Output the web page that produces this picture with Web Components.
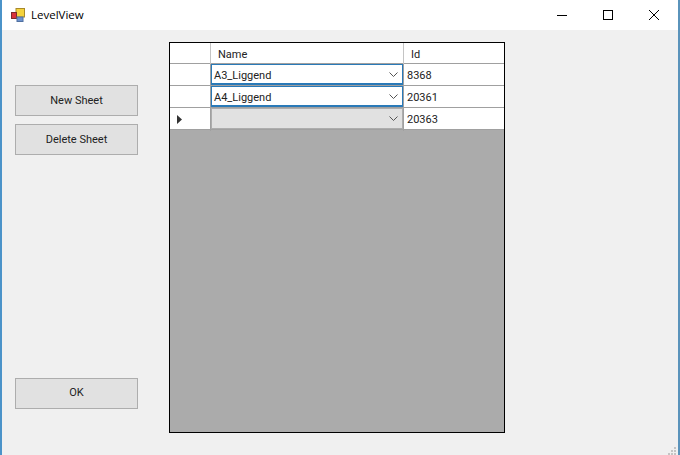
<!DOCTYPE html>
<html>
<head>
<meta charset="utf-8">
<title>LevelView</title>
<style>
  html, body { margin: 0; height: 100%; background: #f0f0f0; }
  body { font: 11px Roboto, "Liberation Sans", Arial, sans-serif; color: #222; overflow: hidden; }
</style>
</head>
<body>
<win-frame caption="LevelView">
  <div slot="side">
    <win-button>New Sheet</win-button>
    <win-button>Delete Sheet</win-button>
  </div>
  <win-button slot="foot">OK</win-button>
  <level-grid>
    <grid-row name="A3_Liggend" sheet-id="8368"></grid-row>
    <grid-row name="A4_Liggend" sheet-id="20361"></grid-row>
    <grid-row current sheet-id="20363"></grid-row>
  </level-grid>
</win-frame>

<script>
class WinFrame extends HTMLElement {
  constructor() {
    super();
    this.attachShadow({ mode: "open" });
  }

  connectedCallback() {
    this.shadowRoot.innerHTML = `
      <style>
        :host {
          display: flex;
          flex-direction: column;
          position: relative;
          box-sizing: border-box;
          width: 680px;
          height: 455px;
          border-left: 2px solid #4b93c9;
          border-right: 2px solid #5a93bb;
          background: #f0f0f0;
        }
        .title {
          display: flex;
          align-items: center;
          height: 30px;
          flex: none;
          background: #fff;
        }
        .title svg.app { margin-left: 9px; }
        .caption {
          flex: 1;
          margin-left: 6px;
          padding-bottom: 2px;
          font: 11.5px "Open Sans", "Liberation Sans", sans-serif;
          color: #000;
        }
        .ctl {
          width: 46px;
          height: 30px;
          display: flex;
          align-items: center;
          justify-content: center;
        }
        .ctls { display: flex; margin-right: 1px; }
        .body {
          flex: 1;
          display: flex;
          padding: 12px 0 22px 13px;
          min-height: 0;
        }
        .left {
          width: 123px;
          margin-right: 31px;
          display: flex;
          flex-direction: column;
          justify-content: space-between;
          padding: 43px 0 24px;
        }
        .grip { position: absolute; right: 1px; bottom: 0; }
      </style>
      <div class="title">
        <svg class="app" width="14" height="14" viewBox="0 0 14 14">
          <rect x="5" y="0.5" width="8.5" height="8.5" fill="#f4d23c" stroke="#a8892a"/>
          <rect x="0.5" y="4.5" width="5" height="6" fill="#d8323a" stroke="#7c2a2a"/>
          <rect x="6" y="9" width="6" height="4.5" fill="#6d93cf" stroke="#5070a0"/>
        </svg>
        <div class="caption"></div>
        <div class="ctls">
          <div class="ctl"><svg width="10" height="10" viewBox="0 0 10 10"><path d="M0 5.5H10" stroke="#000" fill="none"/></svg></div>
          <div class="ctl"><svg width="10" height="10" viewBox="0 0 10 10"><rect x="0.5" y="0.5" width="9" height="9" stroke="#000" fill="none"/></svg></div>
          <div class="ctl"><svg width="10" height="10" viewBox="0 0 10 10"><path d="M0 0L10 10M10 0L0 10" stroke="#000" fill="none"/></svg></div>
        </div>
      </div>
      <div class="body">
        <div class="left">
          <slot name="side"></slot>
          <slot name="foot"></slot>
        </div>
        <slot></slot>
      </div>
      <svg class="grip" width="9" height="8" viewBox="0 0 9 8" fill="#c4c4c4">
        <rect x="6" y="0" width="2" height="2"/>
        <rect x="3" y="3" width="2" height="2"/><rect x="6" y="3" width="2" height="2"/>
        <rect x="0" y="6" width="2" height="2"/><rect x="3" y="6" width="2" height="2"/><rect x="6" y="6" width="2" height="2"/>
      </svg>
    `;
    this.shadowRoot.querySelector(".caption").textContent = this.getAttribute("caption");
  }
}

class WinButton extends HTMLElement {
  constructor() {
    super();
    this.attachShadow({ mode: "open" });
    this.shadowRoot.innerHTML = `
      <style>
        :host {
          display: flex;
          align-items: center;
          justify-content: center;
          box-sizing: border-box;
          width: 123px;
          height: 31px;
          margin-bottom: 8px;
          padding-bottom: 1px;
          background: #e1e1e1;
          border: 1px solid #adadad;
        }
        :host([slot="foot"]) { margin-bottom: 0; padding-bottom: 3px; }
      </style>
      <slot></slot>
    `;
  }
}

class LevelGrid extends HTMLElement {
  constructor() {
    super();
    this.attachShadow({ mode: "open" });
    this.shadowRoot.innerHTML = `
      <style>
        :host {
          display: flex;
          flex-direction: column;
          box-sizing: border-box;
          width: 336px;
          height: 391px;
          border: 1px solid #000;
          background: #ababab;
        }
        .head {
          display: grid;
          grid-template-columns: 41px 192px 101px;
          height: 21px;
          flex: none;
          box-sizing: border-box;
          background: #fff;
          border-bottom: 1px solid #a0a0a0;
          line-height: 22px;
        }
        .head div { box-sizing: border-box; }
        .head .blank { border-right: 1px solid #c4c4c4; }
        .head .name { padding: 1px 0 0 7px; }
        .head .id { padding: 1px 0 0 7px; border-left: 1px solid #c4c4c4; }
      </style>
      <div class="head">
        <div class="blank"></div>
        <div class="name">Name</div>
        <div class="id">Id</div>
      </div>
      <slot></slot>
    `;
  }
}

class GridRow extends HTMLElement {
  constructor() {
    super();
    this.attachShadow({ mode: "open" });
  }

  connectedCallback() {
    const current = this.hasAttribute("current");
    this.shadowRoot.innerHTML = `
      <style>
        :host {
          display: grid;
          grid-template-columns: 41px 192px 101px;
          height: 22px;
          box-sizing: border-box;
          background: #fff;
          border-bottom: 1px solid #a0a0a0;
        }
        .mark {
          box-sizing: border-box;
          border-right: 1px solid #a0a0a0;
          display: flex;
          align-items: center;
          padding-left: 7px;
        }
        .combo {
          box-sizing: border-box;
          display: flex;
          align-items: center;
          justify-content: space-between;
          height: 21px;
          padding: 0 4px 0 2px;
          border: 1px solid #2a7ab8;
          border-bottom-width: 2px;
          background: #fff;
        }
        .combo span { padding-top: 3px; }
        .combo.off {
          border: 1px solid #adadad;
          background: #e1e1e1;
        }
        .id {
          box-sizing: border-box;
          border-left: 1px solid #a0a0a0;
          padding: 1px 0 0 3px;
          line-height: 22px;
        }
      </style>
      <div class="mark">
        ${current ? '<svg width="5" height="9" viewBox="0 0 5 9"><path d="M0 0L5 4.5L0 9Z" fill="#333"/></svg>' : ""}
      </div>
      <div class="combo ${current ? "off" : ""}">
        <span>${this.getAttribute("name") || ""}</span>
        <svg width="9" height="5" viewBox="0 0 9 5"><path d="M0.5 0.5L4.5 4.5L8.5 0.5" stroke="#555" fill="none"/></svg>
      </div>
      <div class="id">${this.getAttribute("sheet-id")}</div>
    `;
  }
}

customElements.define("win-frame", WinFrame);
customElements.define("win-button", WinButton);
customElements.define("level-grid", LevelGrid);
customElements.define("grid-row", GridRow);
</script>
</body>
</html>
